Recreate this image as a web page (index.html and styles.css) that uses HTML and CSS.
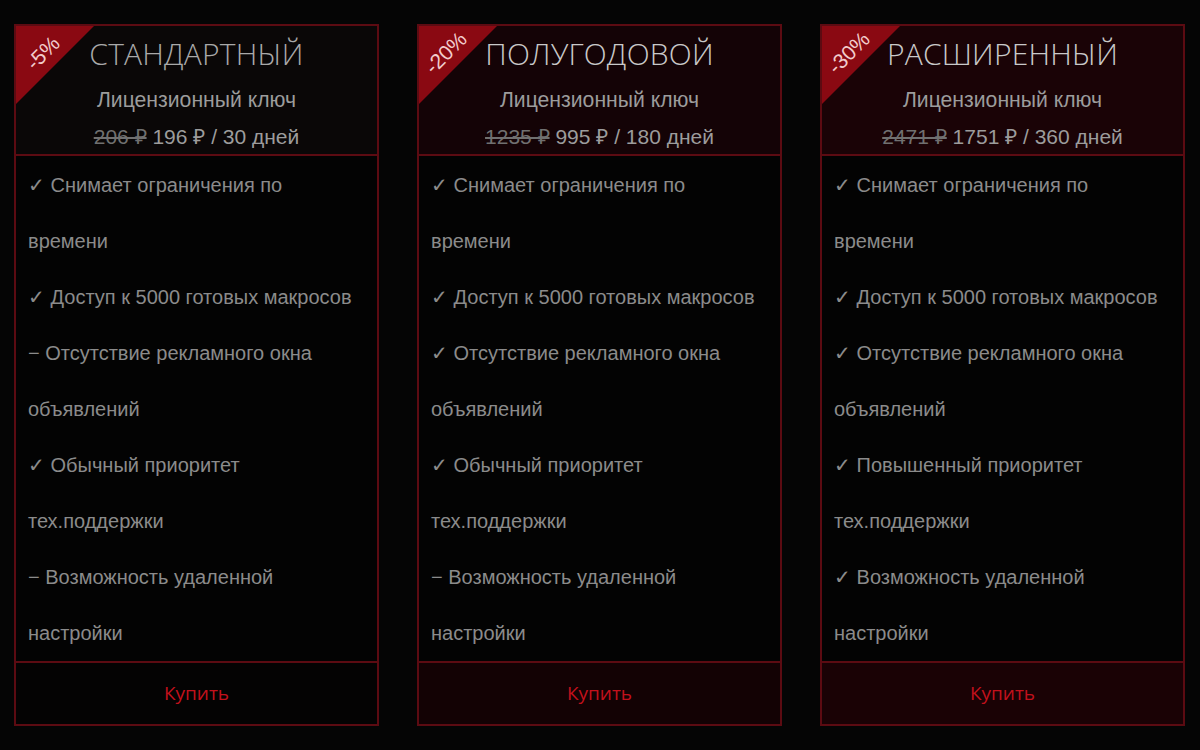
FILE: index.html
```html
<!DOCTYPE html>
<html lang="ru">
<head>
<meta charset="utf-8">
<title>Тарифы</title>
<link rel="stylesheet" href="styles.css">
</head>
<body>
<div class="plans">
  <div class="card card-std">
    <div class="ribbon"><span>-5%</span></div>
    <div class="card-head">
      <div class="title">СТАНДАРТНЫЙ</div>
      <div class="subtitle">Лицензионный ключ</div>
      <div class="price"><s class="old">206 ₽</s> 196 ₽ / 30 дней</div>
    </div>
    <ul class="features">
      <li>✓ Снимает ограничения по времени</li>
      <li>✓ Доступ к 5000 готовых макросов</li>
      <li>− Отсутствие рекламного окна объявлений</li>
      <li>✓ Обычный приоритет тех.поддержки</li>
      <li>− Возможность удаленной настройки</li>
    </ul>
    <div class="card-foot"><a class="buy" href="#">Купить</a></div>
  </div>
  <div class="card card-half">
    <div class="ribbon"><span>-20%</span></div>
    <div class="card-head">
      <div class="title">ПОЛУГОДОВОЙ</div>
      <div class="subtitle">Лицензионный ключ</div>
      <div class="price"><s class="old">1235 ₽</s> 995 ₽ / 180 дней</div>
    </div>
    <ul class="features">
      <li>✓ Снимает ограничения по времени</li>
      <li>✓ Доступ к 5000 готовых макросов</li>
      <li>✓ Отсутствие рекламного окна объявлений</li>
      <li>✓ Обычный приоритет тех.поддержки</li>
      <li>− Возможность удаленной настройки</li>
    </ul>
    <div class="card-foot"><a class="buy" href="#">Купить</a></div>
  </div>
  <div class="card card-ext">
    <div class="ribbon"><span>-30%</span></div>
    <div class="card-head">
      <div class="title">РАСШИРЕННЫЙ</div>
      <div class="subtitle">Лицензионный ключ</div>
      <div class="price"><s class="old">2471 ₽</s> 1751 ₽ / 360 дней</div>
    </div>
    <ul class="features">
      <li>✓ Снимает ограничения по времени</li>
      <li>✓ Доступ к 5000 готовых макросов</li>
      <li>✓ Отсутствие рекламного окна объявлений</li>
      <li>✓ Повышенный приоритет тех.поддержки</li>
      <li>✓ Возможность удаленной настройки</li>
    </ul>
    <div class="card-foot"><a class="buy" href="#">Купить</a></div>
  </div>
</div>
</body>
</html>
```

FILE: styles.css
```css
html, body {
  margin: 0;
  padding: 0;
  background: #050505;
}
body {
  font-family: "Liberation Sans", Arial, sans-serif;
  width: 1200px;
  height: 750px;
  overflow: hidden;
}
.plans {
  display: flex;
  gap: 38px;
  padding: 24px 0 0 14px;
}
.card {
  position: relative;
  width: 361px;
  height: 698px;
  border: 2px solid #5c0b12;
  display: flex;
  flex-direction: column;
  background: #030303;
}
.ribbon {
  position: absolute;
  left: 0;
  top: 0;
  width: 78px;
  height: 78px;
  background: #8a0912;
  clip-path: polygon(0 0, 100% 0, 0 100%);
}
.ribbon span {
  position: absolute;
  left: -3px;
  top: 15px;
  width: 60px;
  text-align: center;
  transform: rotate(-45deg);
  color: #f2cccc;
  font-size: 21px;
  line-height: 24px;
}
.card-head {
  height: 130px;
  padding-top: 8px;
  box-sizing: border-box;
  border-bottom: 2px solid #5c0b12;
  text-align: center;
  background: #0a0707;
}
.card-half .card-head { background: #140306; }
.card-ext .card-head { background: #1a0306; }
.title {
  font-family: "Open Sans", sans-serif;
  font-weight: 300;
  font-size: 30px;
  line-height: 40px;
  color: #a9a9a9;
  letter-spacing: 0.2px;
}
.card-half .title, .card-ext .title { color: #c9c9c9; }
.subtitle {
  margin-top: 8px;
  font-size: 21.2px;
  line-height: 36px;
  color: #9c9c9c;
}
.price {
  font-size: 21px;
  line-height: 37px;
  color: #9c9c9c;
}
.old {
  color: #707070;
}
.features {
  list-style: none;
  margin: 0;
  padding: 1px 23px 0 12px;
  height: 504px;
  font-size: 20px;
  line-height: 56px;
  color: #8b8b8b;
}
.card-foot {
  flex: 1;
  border-top: 2px solid #5c0b12;
  display: flex;
  align-items: center;
  justify-content: center;
  background: #040303;
}
.card-half .card-foot { background: #130204; }
.card-ext .card-foot { background: #1a0205; }
.buy {
  font-family: "Open Sans", sans-serif;
  font-size: 19px;
  color: #c3111c;
  text-decoration: none;
  padding-bottom: 1px;
}
```
